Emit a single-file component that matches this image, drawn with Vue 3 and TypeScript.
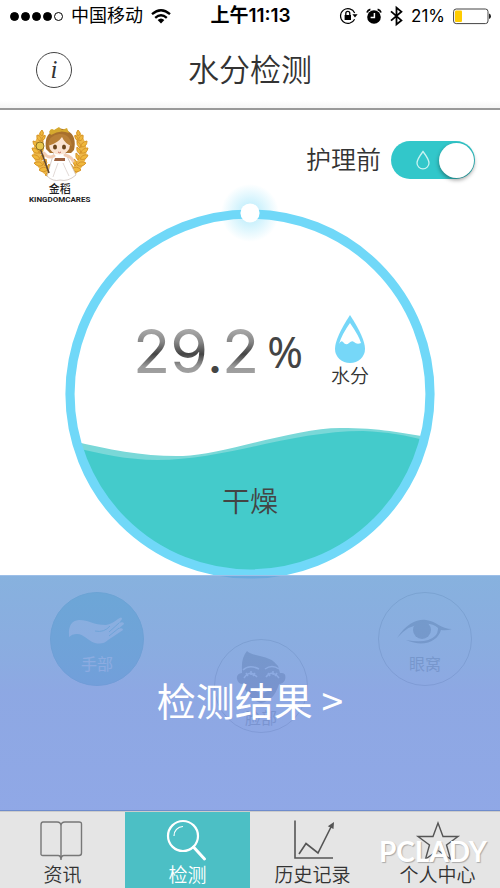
<script setup lang="ts">
import { ref } from 'vue'

type TabIcon = 'book' | 'search' | 'chart' | 'star'

interface Tab {
  label: string
  icon: TabIcon
}

const carrier = '中国移动'
const moisture = ref<string>('29.2')
const condition = ref<string>('干燥')
const beforeCare = ref<boolean>(true)
const activeTab = ref<TabIcon>('search')
const signal: boolean[] = [true, true, true, true, false]

const tabs: Tab[] = [
  { label: '资讯', icon: 'book' },
  { label: '检测', icon: 'search' },
  { label: '历史记录', icon: 'chart' },
  { label: '个人中心', icon: 'star' },
]

const parts = () => moisture.value.split('.')
</script>

<template>
  <div class="app">
    <div class="status">
      <div class="status-left">
        <span class="signal">
          <i v-for="(on, n) in signal" :key="n" class="dot" :class="{ on }"></i>
        </span>
        <span>{{ carrier }}</span>
        <svg class="wifi" width="20" height="15" viewBox="0 0 20 15" fill="none" stroke="#000" stroke-width="2.3">
          <path d="M1 5.2Q10-2.6 19 5.2" />
          <path d="M4.2 8.8Q10 3.6 15.8 8.8" />
          <path d="M6.6 11.1Q10 7.9 13.4 11.1L10 14.6Z" fill="#000" stroke="none" />
        </svg>
      </div>
      <strong class="clock">上午11:13</strong>
      <div class="status-right">
        <svg width="19" height="18" viewBox="0 0 19 18" fill="none" stroke="#000">
          <path d="M15.7 6A7.4 7.4 0 1 0 15.6 12.2" stroke-width="1.2" />
          <path d="M13.4 7.2H18.6L16 10.6Z" fill="#000" stroke="none" />
          <rect x="5.6" y="8" width="6.4" height="5" fill="#000" stroke="none" />
          <path d="M6.8 8V6.4a2 2 0 0 1 4 0V8" stroke-width="1.3" />
        </svg>
        <svg width="16" height="17" viewBox="0 0 16 17" fill="none">
          <circle cx="8" cy="9" r="6.8" fill="#000" />
          <path d="M.9 4.6A5 5 0 0 1 4.4 1.4M15.1 4.6A5 5 0 0 0 11.6 1.4" stroke="#000" stroke-width="1.6" />
          <path d="M8.4 5V9.6H4.6" stroke="#fff" stroke-width="1.5" />
        </svg>
        <svg width="13" height="20" viewBox="0 0 13 20" fill="none" stroke="#000" stroke-width="1.8">
          <path d="M1 5.4 11.4 14.4 6.5 18.4V1.6L11.4 5.8 1 14.6" />
        </svg>
        <span class="percent">21%</span>
        <svg width="38" height="17" viewBox="0 0 38 17">
          <rect x=".6" y="1" width="34.4" height="14.6" rx="2.6" fill="none" stroke="#444" />
          <rect x="2" y="2.6" width="7" height="11.4" rx="1" fill="#fc0" />
          <path d="M36 5.6q2 .6 2 2.7t-2 2.7z" fill="#222" />
        </svg>
      </div>
    </div>

    <header class="header">
      <button class="info" type="button" aria-label="说明">i</button>
      <h1>水分检测</h1>
    </header>

    <main class="main">
      <section class="measure">
        <div class="top-row">
          <div class="brand">
            <svg width="58" height="56" viewBox="0 0 58 56" aria-hidden="true">
              <g fill="#f0b83c" stroke="#d7952a" stroke-width="1">
                <g v-for="side in [0, 1]" :key="side" :transform="side ? 'translate(58 0) scale(-1 1)' : ''">
                  <path d="M12 7Q1 24 10 38Q14 45 22 47" fill="none" stroke="#edb748" stroke-width="7" />
                  <path d="M11 3Q14 6 11 9Q7 7 11 3Z" />
                  <path d="M6 8Q11 9 10 14Q5 13 6 8ZM14 8Q15 12 11 14Q10 10 14 8Z" />
                  <path d="M2 14Q8 15 8 20Q2 20 2 14ZM12 14Q13 18 9 21Q7 17 12 14Z" />
                  <path d="M1 21Q7 21 8 26Q2 27 1 21ZM12 20Q13 25 9 27Q7 23 12 20Z" />
                  <path d="M1 28Q7 27 9 32Q3 34 1 28ZM13 26Q14 31 11 33Q8 29 13 26Z" />
                  <path d="M3 36Q9 33 12 38Q7 41 3 36ZM15 32Q17 36 14 39Q10 35 15 32Z" />
                  <path d="M8 43Q12 38 17 42Q13 47 8 43ZM18 37Q21 41 18 44Q14 41 18 37Z" />
                  <path d="M14 48Q18 43 23 47Q19 51 14 48Z" />
                </g>
              </g>
              <path d="M15 22Q13 8 22 4Q29-1 37 4Q46 9 43 23L40 26H19Z" fill="#a8702d" />
              <path d="M18 5Q20 0 23 3L28 0L31 3L36 1L38 6Q29 2 20 8Z" fill="#d6a92f" />
              <path d="M23 25L16 49Q22 55 29 53Q37 55 45 48L34 25Z" fill="#fff" stroke="#c4b7b2" stroke-width=".7" />
              <path d="M23 29Q17 32 13 26M34 28Q41 30 42 34" fill="none" stroke="#f2cdb4" stroke-width="3" stroke-linecap="round" />
              <path d="M24 31H34V34H23Z" fill="#9b6140" />
              <ellipse cx="28.500" cy="18" rx="10.500" ry="9.500" fill="#fbe4d2" />
              <path d="M17 19Q18 8 28 7Q39 6 41 19Q34 17 31 10Q27 16 17 19Z" fill="#b98037" />
              <ellipse cx="24" cy="20" rx="2" ry="2.600" fill="#6b451c" />
              <ellipse cx="33" cy="20" rx="2" ry="2.600" fill="#6b451c" />
              <path d="M27 25Q28.500 26.500 30 25" fill="none" stroke="#c96e62" />
              <path d="M9 21L18 46" stroke="#5f4632" stroke-width="1.600" />
              <circle cx="9" cy="19" r="4" fill="#e8c64c" stroke="#8d7021" />
              <path d="M27 36Q24 44 22 50M32 36Q35 43 38 49" fill="none" stroke="#d9cfcb" stroke-width=".8" />
            </svg>
            <span class="brand-cn">金稻</span>
            <span class="brand-en">KINGDOMCARES</span>
          </div>
          <label class="care">
            <span>护理前</span>
            <span class="switch">
              <input v-model="beforeCare" type="checkbox" role="switch" />
              <svg class="switch-drop" width="14" height="20" viewBox="0 0 14 20" fill="none" stroke="#c9f3f2" stroke-width="1.300">
                <path d="M7 1.500Q1 9.500 1 13a6 5.800 0 0 0 12 0Q13 9.500 7 1.500Z" />
              </svg>
            </span>
          </label>
        </div>

        <div class="gauge">
          <svg class="dial" viewBox="0 0 370 370" aria-hidden="true">
            <defs>
              <clipPath id="dial-clip"><circle cx="185" cy="185" r="178" /></clipPath>
              <radialGradient id="dial-glow">
                <stop offset="0" stop-color="#70d8f8" stop-opacity=".7" />
                <stop offset=".35" stop-color="#70d8f8" stop-opacity=".35" />
                <stop offset="1" stop-color="#70d8f8" stop-opacity="0" />
              </radialGradient>
            </defs>
            <g clip-path="url(#dial-clip)">
              <path d="M0 230C40 240 80 248 118 247S230 219 275 219S340 225 370 229V370H0Z" fill="#7ad8d8" />
              <path d="M0 236C30 244 60 251 92 251C160 251 225 222 298 222C325 223 345 227 370 234V370H0Z" fill="#44cbcb" />
            </g>
            <circle cx="185" cy="185" r="180" fill="none" stroke="#70d8f8" stroke-width="9.200" />
            <circle cx="185" cy="4" r="29" fill="url(#dial-glow)" />
            <circle cx="185" cy="4" r="9.600" fill="#fff" />
          </svg>
          <div class="readout">
            <div class="value-row">
              <div class="value">
                <span class="digits">{{ parts()[0] }}</span><span class="point">.</span><span class="digits">{{ parts()[1] }}</span>
              </div>
              <span class="unit">%</span>
              <div class="kind">
                <svg width="32" height="49" viewBox="0 0 32 49">
                  <path d="M16 0Q1 23 1 34a15 14 0 0 0 30 0Q31 23 16 0Z" fill="#76d7f8" />
                  <path d="M16 8Q25 21 27 28Q23 30 20 27Q18 25 15 28Q12 31 9 27Q7 25 5 29Q8 19 16 8Z" fill="#fff" />
                </svg>
                <span>水分</span>
              </div>
            </div>
            <p class="condition">{{ condition }}</p>
          </div>
        </div>
      </section>

      <section class="areas">
        <div class="zones">
          <button class="zone selected" type="button">
            <svg width="56" height="26" viewBox="0 0 56 26" fill="currentColor">
              <path d="M0 17Q-1 3 10 2C20 2 24 7 37 7Q43 6 49 1Q53-2 53 1L50 5Q55 3 55 6L49 11Q54 9 54 12L45 18Q42 20 39 22Q34 27 26 25C18 22 14 15 7 16Q3 16 0 19Z" />
              <path d="M26 13Q35 15 41 8M40 18L50 10M40 14L50 5" fill="none" stroke="#78cdd7" />
            </svg>
            <span>手部</span>
          </button>
          <button class="zone middle" type="button">
            <svg width="52" height="56" viewBox="0 0 52 56" fill="currentColor">
              <path d="M7 20Q6 8 12 1Q15 4 25 6Q37 8 43 16L45 23Q52 22 50 30Q48 34 44 34Q39 51 26 53Q13 50 8 34Q3 34 2 29Q1 24 7 23Z" />
              <path d="M8 20Q14 14 24 19M30 19Q37 14 44 19M9 28Q15 19 22 27M31 27Q37 19 44 28M11 23L13 26M16 21V25M20 23L18 26M33 23L35 26M38 21V25M42 23L40 26M20 40Q26 44 33 40" fill="none" stroke="#fff" stroke-width="1.500" />
            </svg>
            <span>脸部</span>
          </button>
          <button class="zone" type="button">
            <svg width="56" height="28" viewBox="0 0 56 28" fill="currentColor">
              <path d="M0 20C10 5 20 1 29 2C39 3 44 11 55 11Q49 13 44 12C41 23 27 30 9 22Q30 26 38 18Q41 15 41 10Q35 5 27 6Q12 6 0 20Z" />
              <circle cx="25" cy="12" r="9" />
            </svg>
            <span>眼窝</span>
          </button>
        </div>
        <a class="result" href="#result">检测结果 &gt;</a>
      </section>
    </main>

    <nav class="tabs">
      <button
        v-for="tab in tabs"
        :key="tab.icon"
        class="tab"
        :class="{ active: tab.icon === activeTab }"
        type="button"
        @click="activeTab = tab.icon"
      >
        <svg v-if="tab.icon === 'book'" width="44" height="44" viewBox="0 0 44 44" fill="none" stroke="#777" stroke-width="1.400">
          <path d="M20 40Q20 35.500 17 35.500H2Q-.5 35.500 0 33V5Q0 2 2 2H16Q20 2 20 6V40ZM20 40Q20 35.500 23 35.500H38Q40.500 35.500 40.500 33V4Q40.500 2 38 2H24Q20 2 20 6" />
        </svg>
        <svg v-else-if="tab.icon === 'search'" width="44" height="44" viewBox="0 0 44 44" fill="none" stroke="#fff">
          <circle cx="17" cy="16" r="15" stroke-width="2.200" />
          <path d="M8 16A9 9 0 0 1 17 6.500" stroke-width="1.200" />
          <path d="M27.500 27L38.500 39" stroke-width="3" stroke-linecap="round" />
        </svg>
        <svg v-else-if="tab.icon === 'chart'" width="44" height="44" viewBox="0 0 44 44" fill="none" stroke="#555" stroke-width="1.600">
          <path d="M4 .5V38H42M8 34L15 23.500L27 33L40.500 6" />
          <path d="M43 2L36.800 6.200L42.500 9Z" fill="#555" stroke="none" />
        </svg>
        <svg v-else width="44" height="44" viewBox="0 0 44 44" fill="none" stroke="#555" stroke-width="1.400">
          <path d="M22 3L27 16.500H42L30.500 25L34.500 39L22 30.500L9.500 39L13.500 25L2 16.500H17Z" />
        </svg>
        <span>{{ tab.label }}</span>
      </button>
      <span class="watermark">PCLADY</span>
    </nav>
  </div>
</template>

<style>
body {
  margin: 0;
  background: #fff;
}
</style>

<style scoped>
.app {
  display: flex;
  flex-direction: column;
  min-height: 100vh;
  color: #333;
  font-family: Inter, "Noto Sans CJK SC", sans-serif;
  font-weight: 350;
}

button {
  margin: 0;
  padding: 0;
  border: 0;
  background: none;
  color: inherit;
  font: inherit;
}

svg {
  display: block;
  flex: none;
  overflow: visible;
}

.status {
  display: grid;
  grid-template-columns: 1fr auto 1fr;
  align-items: center;
  height: 32px;
  padding: 0 9px 0 10px;
  color: #000;
  font-size: 18px;
  font-weight: 400;
  line-height: 24px;
}

.status-left,
.status-right,
.signal {
  display: flex;
  align-items: center;
}

.status-left {
  gap: 8px;
}

.signal {
  gap: 2px;
}

.dot {
  box-sizing: border-box;
  width: 9px;
  height: 9px;
  border: 1px solid #000;
  border-radius: 50%;
}

.dot.on {
  background: #000;
}

.clock {
  font-size: 19px;
  font-weight: 600;
}

.status-right {
  justify-content: flex-end;
  gap: 8px;
}

.percent {
  font-size: 17px;
}

.header {
  display: grid;
  grid-template-columns: 36px 1fr 36px;
  align-items: center;
  height: 76px;
  padding: 0 36px;
  border-bottom: 2px solid #999;
  background: linear-gradient(#fff 90%, #f5f5f5);
}

.info {
  width: 36px;
  height: 36px;
  border: 1px solid #444;
  border-radius: 50%;
  font-family: "Liberation Serif", serif;
  font-size: 25px;
  font-style: italic;
  font-weight: 400;
  line-height: 32px;
}

h1 {
  margin: 0;
  font-size: 31px;
  font-weight: 350;
  line-height: 40px;
  text-align: center;
}

.main {
  display: flex;
  flex: 1;
  flex-direction: column;
}

.measure {
  padding-top: 17px;
}

.top-row {
  display: flex;
  align-items: flex-start;
  justify-content: space-between;
  height: 82px;
  padding: 0 25px 0 29px;
}

.brand {
  display: flex;
  flex-direction: column;
  align-items: center;
  color: #222;
}

.brand-cn {
  font-size: 11px;
  font-weight: 500;
  line-height: 12px;
}

.brand-en {
  font-family: Roboto, sans-serif;
  font-size: 8px;
  font-weight: 700;
  line-height: 10px;
}

.care {
  display: flex;
  align-items: center;
  gap: 10px;
  margin-top: 14px;
  font-size: 25px;
  line-height: 38px;
}

.switch {
  display: grid;
  align-items: center;
}

.switch > * {
  grid-area: 1 / 1;
}

.switch input {
  display: flex;
  align-items: center;
  justify-content: flex-end;
  box-sizing: border-box;
  width: 84px;
  height: 38px;
  margin: 0;
  padding: 1px;
  border-radius: 19px;
  background: #32c7ca;
  appearance: none;
}

.switch input::before {
  width: 35px;
  height: 35px;
  border-radius: 50%;
  background: #fff;
  box-shadow: 0 2px 4px rgb(0 0 0 / 40%);
  content: "";
}

.switch input:not(:checked) {
  justify-content: flex-start;
  background: #bbb;
}

.switch-drop {
  margin-left: 25px;
  pointer-events: none;
}

.gauge {
  display: grid;
  width: 370px;
  margin: 0 auto -4px;
}

.dial,
.readout {
  grid-area: 1 / 1;
}

.dial {
  width: 100%;
}

.readout {
  padding-top: 106px;
}

.value-row {
  display: flex;
  align-items: center;
  gap: 8px;
  height: 74px;
  padding-left: 68px;
}

.value {
  display: flex;
  align-items: baseline;
  padding-top: 4px;
  font-size: 61px;
  font-weight: 400;
  line-height: 62px;
}

.digits {
  background: linear-gradient(#aaa 15%, #888 35%, #444 55%, #999 75%, #aaa);
  background-clip: text;
  color: transparent;
}

.point {
  color: #444;
  font-size: 42px;
  font-weight: 700;
}

.unit {
  color: #444;
  font-family: "Noto Sans", sans-serif;
  font-size: 43px;
  font-weight: 400;
  line-height: 62px;
}

.kind {
  display: flex;
  flex-direction: column;
  align-items: center;
  margin-left: 20px;
  font-size: 19px;
  line-height: 26px;
}

.condition {
  margin: 97px 0 0;
  color: #444;
  font-size: 28px;
  line-height: 32px;
  text-align: center;
}

.areas {
  display: grid;
  flex: 1;
  z-index: 1;
}

.zones,
.result {
  grid-area: 1 / 1;
}

.zones {
  display: flex;
  align-items: flex-start;
  justify-content: space-between;
  padding: 17px 28px 30px 50px;
}

.zone {
  display: flex;
  flex-direction: column;
  align-items: center;
  justify-content: space-between;
  box-sizing: border-box;
  width: 94px;
  height: 94px;
  padding: 25px 0 9px;
  border: 1px solid #bbb;
  border-radius: 50%;
  color: #989898;
  font-size: 16px;
  font-weight: 400;
  line-height: 24px;
}

.zone.selected {
  border-color: #70bfca;
  background: #78cdd7;
  color: #fff;
}

.zone.middle {
  margin-top: 47px;
  padding: 10px 0 2px;
}

.result {
  z-index: 1;
  display: flex;
  align-items: center;
  justify-content: center;
  box-sizing: border-box;
  padding-top: 12px;
  border-top: 1px solid #9dbfe8;
  border-bottom: 1px solid #6f8ccc;
  background: linear-gradient(rgb(105 158 214 / 80%), rgb(110 151 217 / 80%) 35%, rgb(113 146 220 / 80%) 50%, rgb(116 146 224 / 80%));
  color: #fff;
  font-family: "Noto Sans CJK SC", sans-serif;
  font-size: 39px;
  font-weight: 400;
  text-decoration: none;
}

.tabs {
  position: relative;
  display: grid;
  grid-template-columns: repeat(4, 1fr);
  height: 76px;
  border-top: 1px solid #ccc;
  background: #e5e5e5;
}

.tab {
  display: flex;
  flex-direction: column;
  align-items: center;
  justify-content: flex-end;
  font-size: 19px;
  line-height: 24px;
}

.tab.active {
  background: #4cbfc5;
  color: #fff;
}

.watermark {
  position: absolute;
  top: 19px;
  right: 13px;
  color: #fff;
  font-family: Lato, sans-serif;
  font-size: 28px;
  font-weight: 700;
  line-height: 40px;
  text-shadow: 1px 1px 1px #aaa;
  pointer-events: none;
}
</style>
